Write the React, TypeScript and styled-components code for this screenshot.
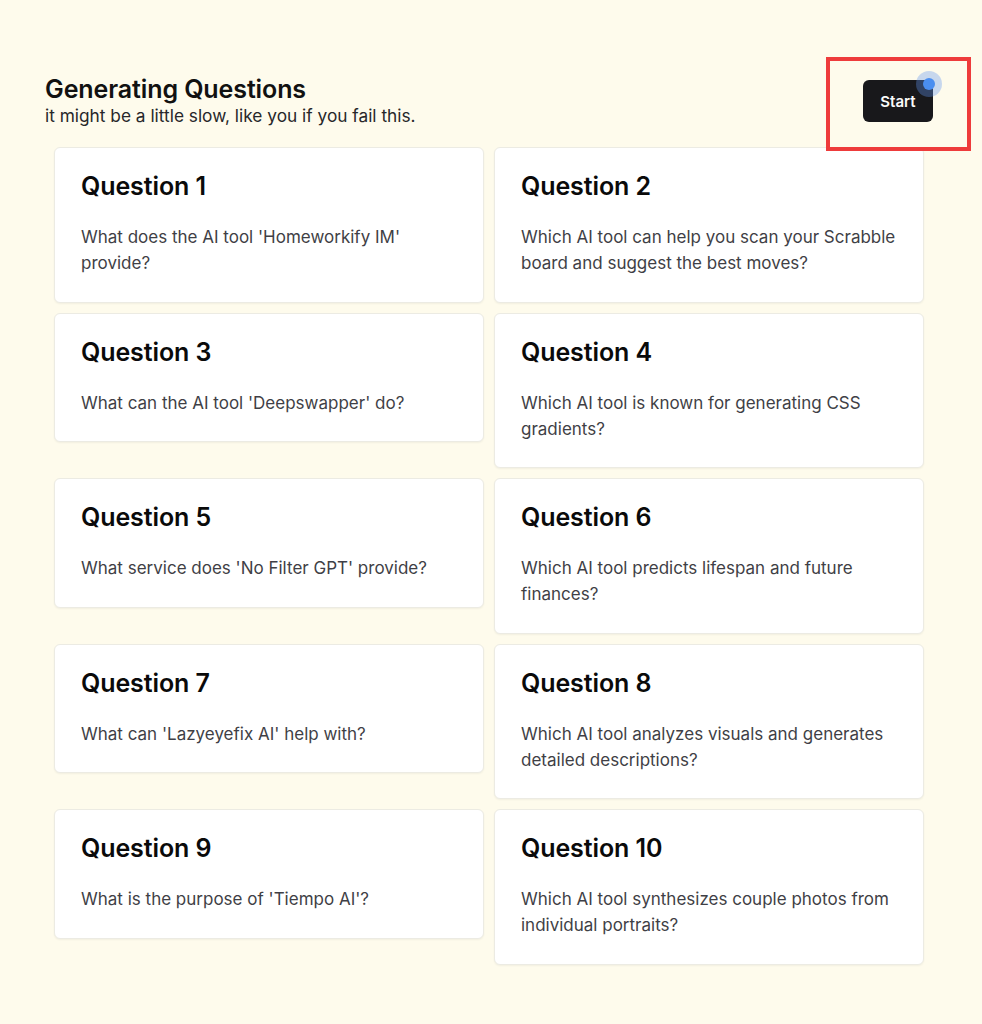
import React from "react";
import styled, { createGlobalStyle } from "styled-components";

const Global = createGlobalStyle`
  html, body { margin: 0; padding: 0; background: #fefbec; }
  body { font-family: Inter, "Noto Sans", sans-serif; color: #111111; }
  * { box-sizing: border-box; }
`;

const Page = styled.div`
  padding: 74px 49px 40px 45px;
  display: flex;
  flex-direction: column;
`;

const Header = styled.header`
  display: flex;
  align-items: center;
  justify-content: space-between;
`;

const TitleBlock = styled.div`
  display: flex;
  flex-direction: column;
`;

const Title = styled.h1`
  margin: 0;
  font-size: 25px;
  line-height: 30px;
  font-weight: 600;
  letter-spacing: -0.1px;
  color: #111111;
`;

const Subtitle = styled.p`
  margin: 0;
  font-size: 17.3px;
  line-height: 24px;
  color: #27272a;
`;

const ButtonWrap = styled.div`
  position: relative;
`;

const StartButton = styled.button`
  width: 70px;
  height: 42px;
  border: none;
  border-radius: 6px;
  background: #18181b;
  color: #fafafa;
  font-family: Inter, sans-serif;
  font-size: 15px;
  font-weight: 600;
  cursor: pointer;
`;

const Highlight = styled.div`
  position: absolute;
  left: -37px;
  top: -23px;
  width: 145px;
  height: 94px;
  border: 4px solid #ee3b3b;
  pointer-events: none;
`;

const Halo = styled.span`
  position: absolute;
  left: 53px;
  top: -9px;
  width: 26px;
  height: 26px;
  border-radius: 50%;
  background: rgba(96, 150, 240, 0.35);
  display: flex;
  align-items: center;
  justify-content: center;
`;

const Dot = styled.span`
  width: 12px;
  height: 12px;
  border-radius: 50%;
  background: #4a8ef0;
`;

const Grid = styled.div`
  margin: 19px 8px 0 9px;
  display: grid;
  grid-template-columns: 430px 430px;
  column-gap: 10px;
  row-gap: 10px;
  align-items: start;
`;

const Card = styled.div`
  background: #ffffff;
  border: 1px solid #ecebe3;
  border-radius: 6px;
  box-shadow: 0 1px 2px rgba(0, 0, 0, 0.05);
  padding: 24px 26px 25.5px 26px;
`;

const CardTitle = styled.h2`
  margin: 0;
  font-size: 25px;
  line-height: 28px;
  font-weight: 600;
  letter-spacing: -0.1px;
  color: #0a0a0a;
`;

const CardText = styled.p`
  margin: 24px 0 0 0;
  font-size: 17px;
  line-height: 26px;
  color: #3f3f46;
`;

const questions = [
  "What does the AI tool 'Homeworkify IM' provide?",
  "Which AI tool can help you scan your Scrabble board and suggest the best moves?",
  "What can the AI tool 'Deepswapper' do?",
  "Which AI tool is known for generating CSS gradients?",
  "What service does 'No Filter GPT' provide?",
  "Which AI tool predicts lifespan and future finances?",
  "What can 'Lazyeyefix AI' help with?",
  "Which AI tool analyzes visuals and generates detailed descriptions?",
  "What is the purpose of 'Tiempo AI'?",
  "Which AI tool synthesizes couple photos from individual portraits?",
];

export default function App() {
  return (
    <>
      <Global />
      <Page>
        <Header>
          <TitleBlock>
            <Title>Generating Questions</Title>
            <Subtitle>it might be a little slow, like you if you fail this.</Subtitle>
          </TitleBlock>
          <ButtonWrap>
            <StartButton>Start</StartButton>
            <Halo>
              <Dot />
            </Halo>
            <Highlight />
          </ButtonWrap>
        </Header>
        <Grid>
          {questions.map((q, i) => (
            <Card key={i}>
              <CardTitle>Question {i + 1}</CardTitle>
              <CardText>{q}</CardText>
            </Card>
          ))}
        </Grid>
      </Page>
    </>
  );
}
